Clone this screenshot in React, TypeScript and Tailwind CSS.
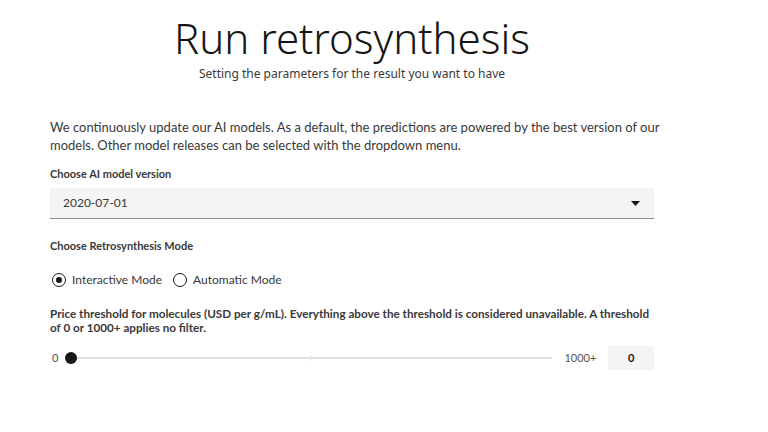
import { useState } from "react";

const heading = { fontFamily: '"Noto Sans", "Liberation Sans", sans-serif' };
const body = { fontFamily: 'Lato, "Liberation Sans", sans-serif' };

export default function App() {
  const [mode, setMode] = useState("interactive");

  return (
    <div className="min-h-screen bg-white text-[#161616]" style={body}>
      <div className="ml-[50px] w-[604px] pt-[12px]">
        <h1 className="text-center text-[42px] font-light leading-[52px] text-[#161616]" style={heading}>
          Run retrosynthesis
        </h1>
        <p className="mt-[2px] text-center text-[12px] leading-[16px] text-[#393939]" style={heading}>
          Setting the parameters for the result you want to have
        </p>

        <p className="mt-[36px] w-[616px] text-[13px] leading-[18px] text-[#393939]">
          We continuously update our AI models. As a default, the predictions are powered by the best version of our
          models. Other model releases can be selected with the dropdown menu.
        </p>

        <label className="mt-[12px] block text-[11px] font-bold leading-[16px] text-[#393939]">
          Choose AI model version
        </label>
        <div className="mt-[6px] flex h-[31px] items-center justify-between border-b border-[#8d8d8d] bg-[#f4f4f4] pl-[13px] pr-[14px]">
          <span className="text-[12px] text-[#393939]">2020-07-01</span>
          <svg width="9" height="5" viewBox="0 0 9 5">
            <path d="M0 0h9L4.5 5z" fill="#161616" />
          </svg>
        </div>

        <label className="mt-[19px] block text-[11px] font-bold leading-[16px] text-[#393939]">
          Choose Retrosynthesis Mode
        </label>

        <div className="mt-[17px] flex items-center text-[12px] text-[#393939]">
          <button onClick={() => setMode("interactive")} className="ml-[2px] flex items-center gap-[6px]">
            <span className="flex h-[14px] w-[14px] items-center justify-center rounded-full border border-[#161616]">
              {mode === "interactive" && <span className="h-[6px] w-[6px] rounded-full bg-[#161616]" />}
            </span>
            Interactive Mode
          </button>
          <button onClick={() => setMode("automatic")} className="ml-[11px] flex items-center gap-[6px]">
            <span className="flex h-[14px] w-[14px] items-center justify-center rounded-full border border-[#161616]">
              {mode === "automatic" && <span className="h-[6px] w-[6px] rounded-full bg-[#161616]" />}
            </span>
            Automatic Mode
          </button>
        </div>

        <p className="mt-[17px] text-[11.7px] font-bold leading-[14px] text-[#393939]">
          Price threshold for molecules (USD per g/mL). Everything above the threshold is considered unavailable. A threshold
          of 0 or 1000+ applies no filter.
        </p>

        <div className="mt-[12px] flex items-center">
          <span className="ml-[2px] text-[11px] text-[#525252]">0</span>
          <div className="relative ml-[7px] flex h-[24px] w-[490px] items-center">
            <div className="h-[2px] w-full bg-[#e0e0e0]" />
            <div className="absolute left-[245px] top-[9px] h-[6px] w-px bg-[#e0e0e0]" />
            <div className="absolute left-0 top-[6px] h-[12px] w-[12px] rounded-full bg-[#161616]" />
          </div>
          <span className="ml-[12px] text-[11px] text-[#525252]">1000+</span>
          <div className="ml-[12px] flex h-[24px] w-[46px] items-center justify-center bg-[#f4f4f4] text-[11px] font-bold text-[#161616]">
            0
          </div>
        </div>
      </div>
    </div>
  );
}
